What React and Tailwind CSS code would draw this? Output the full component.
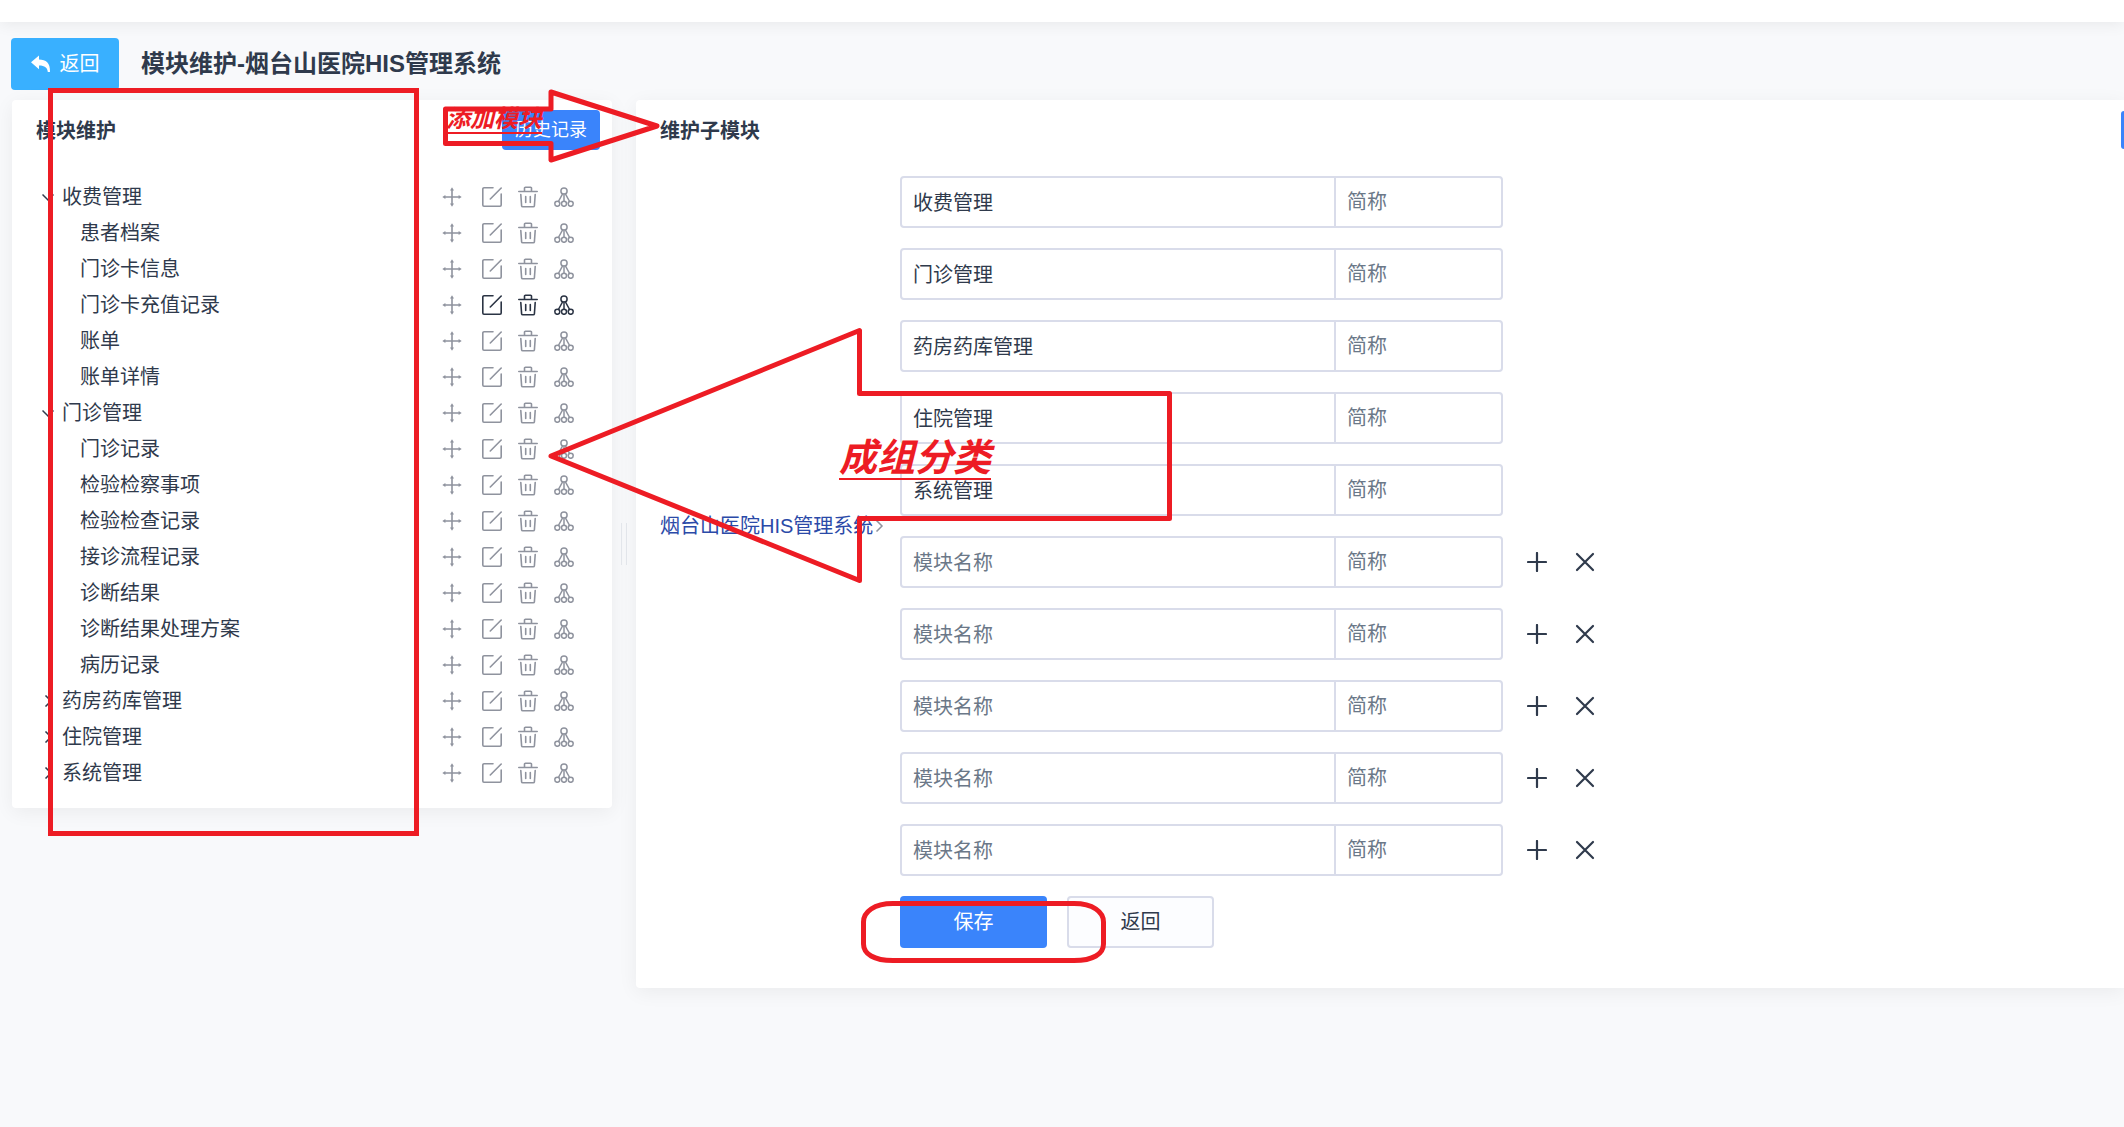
import { useState } from "react";

const initialTree = [
  {
    name: "收费管理",
    open: true,
    children: [
      "患者档案",
      "门诊卡信息",
      "门诊卡充值记录",
      "账单",
      "账单详情",
    ],
  },
  {
    name: "门诊管理",
    open: true,
    children: [
      "门诊记录",
      "检验检察事项",
      "检验检查记录",
      "接诊流程记录",
      "诊断结果",
      "诊断结果处理方案",
      "病历记录",
    ],
  },
  { name: "药房药库管理", open: false, children: [] },
  { name: "住院管理", open: false, children: [] },
  { name: "系统管理", open: false, children: [] },
];

const initialModules = [
  "收费管理",
  "门诊管理",
  "药房药库管理",
  "住院管理",
  "系统管理",
  "",
  "",
  "",
  "",
  "",
];

// icons
const ReplyIcon = () => (
  <svg viewBox="0 0 20 18" className="h-[18px] w-5" fill="currentColor">
    <path d="M0 7.2 8 0.6v4c7 .2 11.3 3.2 11 12.4h-2.2c-.3-4.4-3-6.6-8.8-6.6v3.8z" />
  </svg>
);

const MoveIcon = () => (
  <svg viewBox="0 0 20 20" className="size-5" fill="currentColor">
    <path d="M9.2 2.5h1.6v6.7h6.7v1.6h-6.7v6.7H9.2v-6.7H2.5V9.200h6.700z" />
    <path d="M10 .3 12 3.400H8zM10 19.700 8 16.600h4zM.3 10 3.400 8v4zM19.700 10l-3.100 2V8z" />
  </svg>
);

const EditIcon = () => (
  <svg
    viewBox="0 0 20 20"
    className="size-5"
    fill="none"
    stroke="currentColor"
    strokeWidth="1.6"
    strokeLinecap="round"
  >
    <path d="M11 .8H2A1.200 1.200 0 0 0 .8 2v16A1.200 1.200 0 0 0 2 19.200h16a1.200 1.200 0 0 0 1.200-1.200V7" />
    <path d="M8.300 12 19.200 1" />
  </svg>
);

const TrashIcon = () => (
  <svg
    viewBox="0 0 20 22"
    className="h-[22px] w-5"
    fill="none"
    stroke="currentColor"
    strokeWidth="1.6"
    strokeLinecap="round"
    strokeLinejoin="round"
  >
    <path d="M.8 5.500h18.400M6.500 5.200V2.200A.9.9 0 0 1 7.400 1.300h5.200a.9.9 0 0 1 .9.9v3" />
    <path d="m2.800 8.500.8 11.300a1.200 1.200 0 0 0 1.200 1h10.400a1.200 1.200 0 0 0 1.200-1l.8-11.300M7.700 10.500v6M12.300 10.500v6" />
  </svg>
);

const BranchIcon = () => (
  <svg
    viewBox="0 0 20 20"
    className="size-5"
    fill="none"
    stroke="currentColor"
    strokeWidth="1.5"
  >
    <circle cx="10" cy="4" r="3.1" />
    <circle cx="3.3" cy="16.8" r="2.500" />
    <circle cx="10" cy="16.8" r="2.500" />
    <circle cx="16.7" cy="16.8" r="2.500" />
    <path d="M10 7.200v7M8.600 6.800 4.400 14.500M11.400 6.800l4.200 7.700" />
  </svg>
);

const Chevron = ({ open }) => (
  <svg
    viewBox="0 0 12 12"
    className={open ? "size-3 rotate-90" : "size-3"}
    fill="none"
    stroke="currentColor"
    strokeWidth="1.5"
  >
    <path d="M3.500 .5 9 6l-5.500 5.500" />
  </svg>
);

const TreeRow = ({ name, child, open, active, onToggle }) => (
  <li className="flex h-9 items-center pt-[2px]">
    {child ? (
      <span className="pl-11">{name}</span>
    ) : (
      <button
        type="button"
        onClick={onToggle}
        className="flex items-center gap-2 pl-[6px]"
      >
        <Chevron open={open} />
        {name}
      </button>
    )}
    <div className="ml-auto flex items-center gap-4 pr-[14px] text-[#8f939e]">
      <button type="button" aria-label="移动" className="mr-1">
        <MoveIcon />
      </button>
      <button type="button" aria-label="编辑" className={active ? "text-[#2b3444]" : ""}>
        <EditIcon />
      </button>
      <button type="button" aria-label="删除" className={active ? "text-[#2b3444]" : ""}>
        <TrashIcon />
      </button>
      <button type="button" aria-label="子模块" className={active ? "text-[#2b3444]" : ""}>
        <BranchIcon />
      </button>
    </div>
  </li>
);

const ModuleRow = ({ value, editable, onChange }) => (
  <div className="flex h-[52px] items-center">
    <div className="flex h-full w-[603px] rounded border-2 border-[#d9dcea] bg-white focus-within:border-[#3a84fb]">
      <input
        aria-label="模块名称"
        placeholder="模块名称"
        value={value}
        onChange={(e) => onChange(e.target.value)}
        className="min-w-0 flex-1 px-[11px] pt-[2px] outline-none placeholder:text-[#6b7888]"
      />
      <input
        aria-label="简称"
        placeholder="简称"
        className="w-[167px] border-l-2 border-[#d9dcea] px-[11px] outline-none placeholder:text-[#6b7888]"
      />
    </div>
    {editable && (
      <div className="ml-6 flex gap-7">
        <button type="button" aria-label="添加">
          <svg viewBox="0 0 20 20" className="size-5" stroke="currentColor" strokeWidth="2.2" strokeLinecap="round">
            <path d="M10 1v18M1 10h18" />
          </svg>
        </button>
        <button type="button" aria-label="移除">
          <svg viewBox="0 0 20 20" className="size-5" stroke="currentColor" strokeWidth="2.2" strokeLinecap="round">
            <path d="m2 2 16 16M18 2 2 18" />
          </svg>
        </button>
      </div>
    )}
  </div>
);

// red marks drawn over the page
const Annotations = () => (
  <div className="pointer-events-none absolute inset-0 text-[#ed1c24]">
    <svg
      className="absolute top-0 left-0 h-[1000px] w-[1200px]"
      viewBox="0 0 1200 1000"
      fill="none"
      stroke="currentColor"
      strokeWidth="5"
    >
      <rect x="50.5" y="90.5" width="366" height="743" />
      <path
        strokeLinejoin="round"
        d="M445.500 109H551V92l106 34-106 34v-16.500H445.500z"
      />
      <path
        strokeLinejoin="round"
        d="M551 456 859.500 330.500v63H1169.500v125H859.500V580.500z"
      />
      <path d="M893 903.500H1074C1093 903.500 1103.500 912 1103.500 922V944C1103.500 954 1093 960.500 1074 960.500H893C874 960.500 863.500 954 863.500 944V922C863.500 912 874 903.500 893 903.500z" />
    </svg>
    <span className="absolute top-[106px] left-[446px] border-b-2 text-[24px] leading-[26px] font-bold italic">
      添加模块
    </span>
    <span className="absolute top-[438px] left-[839px] border-b-2 text-[38px] leading-[40px] font-bold italic">
      成组分类
    </span>
  </div>
);

const App = () => {
  const [tree, setTree] = useState(initialTree);
  const [modules, setModules] = useState(initialModules);

  const toggle = (index) =>
    setTree(tree.map((t, i) => (i === index ? { ...t, open: !t.open } : t)));

  const rename = (index, value) =>
    setModules(modules.map((m, i) => (i === index ? value : m)));

  return (
    <div className="relative min-h-screen overflow-hidden bg-[#f8f9fb] font-['Liberation_Sans','Noto_Sans_CJK_SC',sans-serif] text-[20px] leading-[30px] text-[#2f3a4c]">
      <div className="h-[22px] bg-white shadow-[0_2px_16px_rgba(0,0,0,0.07)]" />

      <header className="flex items-center gap-[22px] px-[11px] pt-4">
        <button
          type="button"
          className="flex h-[52px] w-[108px] items-center justify-center gap-[9px] rounded bg-[#39b0ff] text-white"
        >
          <ReplyIcon />
          返回
        </button>
        <h1 className="text-[24px] font-bold">模块维护-烟台山医院HIS管理系统</h1>
      </header>

      <main className="flex items-start pt-[10px] pl-3">
        <section className="w-[600px] shrink-0 rounded bg-white px-6 pb-[18px] shadow-[0_4px_20px_rgba(0,0,0,0.06)]">
          <div className="-mr-3 flex h-[78px] items-start justify-between pt-[10px]">
            <h2 className="pt-[6px] font-bold">模块维护</h2>
            <button
              type="button"
              className="h-10 w-[98px] rounded bg-[#3a84fb] text-[18px] text-white"
            >
              历史记录
            </button>
          </div>
          <ul>
            {tree.map((group, index) => (
              <li key={group.name}>
                <ul>
                  <TreeRow
                    name={group.name}
                    open={group.open}
                    onToggle={() => toggle(index)}
                  />
                  {group.open &&
                    group.children.map((name) => (
                      <TreeRow
                        key={name}
                        name={name}
                        child
                        active={name === "门诊卡充值记录"}
                      />
                    ))}
                </ul>
              </li>
            ))}
          </ul>
        </section>

        <div className="flex w-6 shrink-0 justify-center self-center">
          <div className="h-[42px] w-[6px] border-x border-[#e4e7ec]" />
        </div>

        <section className="min-w-0 flex-1 rounded-l bg-white pb-10 pl-6 shadow-[0_4px_20px_rgba(0,0,0,0.06)]">
          <div className="flex h-[76px] items-start justify-between pt-[11px]">
            <h2 className="pt-[5px] font-bold">维护子模块</h2>
            <button
              type="button"
              aria-label="更多"
              className="h-[38px] w-[3px] rounded-l bg-[#3a84fb]"
            />
          </div>
          <div className="flex items-center">
            <a
              href="#system"
              className="flex w-[240px] shrink-0 items-center whitespace-nowrap text-[#2b4aa8]"
            >
              烟台山医院HIS管理系统
              <span className="text-[#8f939e]">
                <Chevron />
              </span>
            </a>
            <div className="flex flex-col gap-5">
              {modules.map((m, index) => (
                <ModuleRow
                  key={index}
                  value={m}
                  editable={index > 4}
                  onChange={(v) => rename(index, v)}
                />
              ))}
            </div>
          </div>
          <div className="mt-5 ml-[240px] flex gap-5">
            <button
              type="button"
              className="h-[52px] w-[147px] rounded bg-[#3a84fb] text-white"
            >
              保存
            </button>
            <button
              type="button"
              className="h-[52px] w-[147px] rounded border-2 border-[#d9dcea] bg-[#fcfdff]"
            >
              返回
            </button>
          </div>
        </section>
      </main>

      <Annotations />
    </div>
  );
};

export default App;
